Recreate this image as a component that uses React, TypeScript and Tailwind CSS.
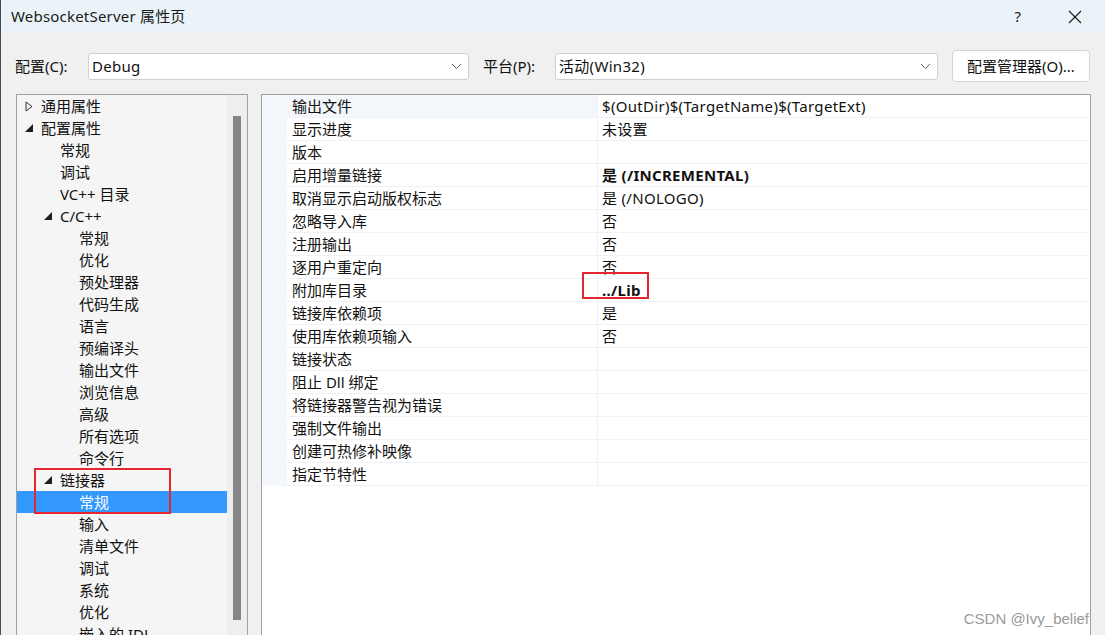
import React from 'react';

const FONT = '"Noto Sans", "Noto Sans CJK SC", sans-serif';

type TreeItem = { label: string; level: number; arrow?: 'open' | 'closed'; selected?: boolean };

const treeItems: TreeItem[] = [
  { label: '通用属性', level: 0, arrow: 'closed' },
  { label: '配置属性', level: 0, arrow: 'open' },
  { label: '常规', level: 1 },
  { label: '调试', level: 1 },
  { label: 'VC++ 目录', level: 1 },
  { label: 'C/C++', level: 1, arrow: 'open' },
  { label: '常规', level: 2 },
  { label: '优化', level: 2 },
  { label: '预处理器', level: 2 },
  { label: '代码生成', level: 2 },
  { label: '语言', level: 2 },
  { label: '预编译头', level: 2 },
  { label: '输出文件', level: 2 },
  { label: '浏览信息', level: 2 },
  { label: '高级', level: 2 },
  { label: '所有选项', level: 2 },
  { label: '命令行', level: 2 },
  { label: '链接器', level: 1, arrow: 'open' },
  { label: '常规', level: 2, selected: true },
  { label: '输入', level: 2 },
  { label: '清单文件', level: 2 },
  { label: '调试', level: 2 },
  { label: '系统', level: 2 },
  { label: '优化', level: 2 },
  { label: '嵌入的 IDL', level: 2 },
];

// name, value, bold
const props: [string, string, boolean?][] = [
  ['输出文件', '$(OutDir)$(TargetName)$(TargetExt)'],
  ['显示进度', '未设置'],
  ['版本', ''],
  ['启用增量链接', '是 (/INCREMENTAL)', true],
  ['取消显示启动版权标志', '是 (/NOLOGO)'],
  ['忽略导入库', '否'],
  ['注册输出', '否'],
  ['逐用户重定向', '否'],
  ['附加库目录', '../Lib', true],
  ['链接库依赖项', '是'],
  ['使用库依赖项输入', '否'],
  ['链接状态', ''],
  ['阻止 Dll 绑定', ''],
  ['将链接器警告视为错误', ''],
  ['强制文件输出', ''],
  ['创建可热修补映像', ''],
  ['指定节特性', ''],
];

function Chevron() {
  return (
    <svg width="11" height="7" viewBox="0 0 11 7" className="shrink-0">
      <polyline points="1,1 5.5,5.5 10,1" fill="none" stroke="#606060" strokeWidth="1" />
    </svg>
  );
}

function Arrow({ kind }: { kind: 'open' | 'closed' }) {
  if (kind === 'closed') {
    return (
      <svg width="8" height="11" viewBox="0 0 8 11">
        <polygon points="1,1 7,5.5 1,10" fill="none" stroke="#333" strokeWidth="1" />
      </svg>
    );
  }
  return (
    <svg width="8" height="8" viewBox="0 0 8 8">
      <polygon points="8,0 8,8 0,8" fill="#1e1e1e" />
    </svg>
  );
}

function Select({ value, width }: { value: string; width: string }) {
  return (
    <div className={`${width} h-[27px] bg-white border border-[#d0d0d0] rounded-[3px] flex items-center justify-between pl-[3px] pr-[6px]`}>
      <span className="text-[15px] text-[#111] leading-none tracking-[0.3px]">{value}</span>
      <Chevron />
    </div>
  );
}

export default function App() {
  return (
    <div
      className="relative w-[1105px] h-[635px] overflow-hidden bg-[#f0f0f0] border-l border-[#4a4a4a] flex flex-col"
      style={{ fontFamily: FONT }}
    >
      {/* title bar */}
      <div className="h-[33px] shrink-0 bg-[#eaf3f7] flex items-center justify-between pl-[10px]">
        <span className="text-[15px] text-[#1a1a1a] leading-none tracking-[0.2px]">WebsocketServer 属性页</span>
        <div className="flex items-center">
          <span className="text-[15px] text-[#1a1a1a] leading-none mr-[47px]">?</span>
          <svg width="14" height="14" viewBox="0 0 14 14" className="mr-[23px]">
            <line x1="1" y1="1" x2="13" y2="13" stroke="#1a1a1a" strokeWidth="1.1" />
            <line x1="13" y1="1" x2="1" y2="13" stroke="#1a1a1a" strokeWidth="1.1" />
          </svg>
        </div>
      </div>

      {/* configuration row */}
      <div className="mt-[17px] h-[32px] shrink-0 flex items-center pl-[14px]">
        <span className="text-[15px] text-[#111] leading-none w-[73px]">配置(C):</span>
        <Select value="Debug" width="w-[381px]" />
        <span className="text-[15px] text-[#111] leading-none ml-[14px] w-[72px]">平台(P):</span>
        <Select value="活动(Win32)" width="w-[383px]" />
        <div className="ml-[14px] w-[138px] h-[32px] bg-white border border-[#d4d4d4] rounded-[4px] flex items-center justify-center text-[15px] text-[#111] leading-none">
          配置管理器(O)...
        </div>
      </div>

      {/* panels */}
      <div className="mt-[12px] flex-1 flex pl-[15px] min-h-0">
        {/* tree */}
        <div className="relative w-[232px] border border-b-0 border-[#a0a0a0] bg-[#f5f5f5] flex overflow-hidden">
          <div className="flex-1 flex flex-col">
            {treeItems.map((t, i) => (
              <div
                key={i}
                className={`h-[22px] shrink-0 flex items-center ${t.selected ? 'bg-[#3399ff] text-white' : 'text-[#111]'}`}
              >
                <div
                  className={`flex items-center justify-end pr-[8px] ${
                    t.level === 0 ? 'w-[24px]' : t.level === 1 ? 'w-[43px]' : 'w-[62px]'
                  }`}
                >
                  {t.arrow && <Arrow kind={t.arrow} />}
                </div>
                <span className="text-[15px] leading-none whitespace-nowrap">{t.label}</span>
              </div>
            ))}
          </div>
          <div className="w-[20px] shrink-0 bg-[#eeeeee] flex justify-center pt-[21px]">
            <div className="w-[8px] h-[504px] bg-[#858585]" />
          </div>
          <div className="absolute left-[17px] top-[373px] w-[137px] h-[46px] border-2 border-[#e52630]" />
        </div>

        {/* property grid */}
        <div className="relative ml-[13px] w-[830px] border border-b-0 border-[#a0a0a0] bg-white flex flex-col">
          {props.map(([name, value, bold], i) => (
            <div key={i} className="h-[23px] shrink-0 flex">
              <div className="w-[25px] shrink-0 bg-[#f4f7fb]" />
              <div
                className={`w-[310px] shrink-0 flex items-center pl-[5px] border-b border-[#eef2f8] ${
                  i === 0 ? 'bg-[#f3f6fa]' : ''
                }`}
              >
                <span className="text-[15px] text-[#111] leading-none whitespace-nowrap">{name}</span>
              </div>
              <div className="flex-1 flex items-center pl-[4px] border-b border-l border-[#eef2f8]">
                <span
                  className={`text-[15px] text-[#111] leading-none whitespace-nowrap tracking-[0.3px] ${
                    bold ? 'font-bold' : ''
                  }`}
                >
                  {value}
                </span>
              </div>
            </div>
          ))}
          <div className="absolute left-[320px] top-[177px] w-[67px] h-[27px] border-2 border-[#e52630]" />
        </div>
      </div>

      <span
        className="absolute right-[16px] bottom-[9px] text-[15px] text-[#9a9a9a] leading-none"
        style={{ fontFamily: '"Liberation Sans", Arial, sans-serif' }}
      >
        CSDN @Ivy_belief
      </span>
    </div>
  );
}
